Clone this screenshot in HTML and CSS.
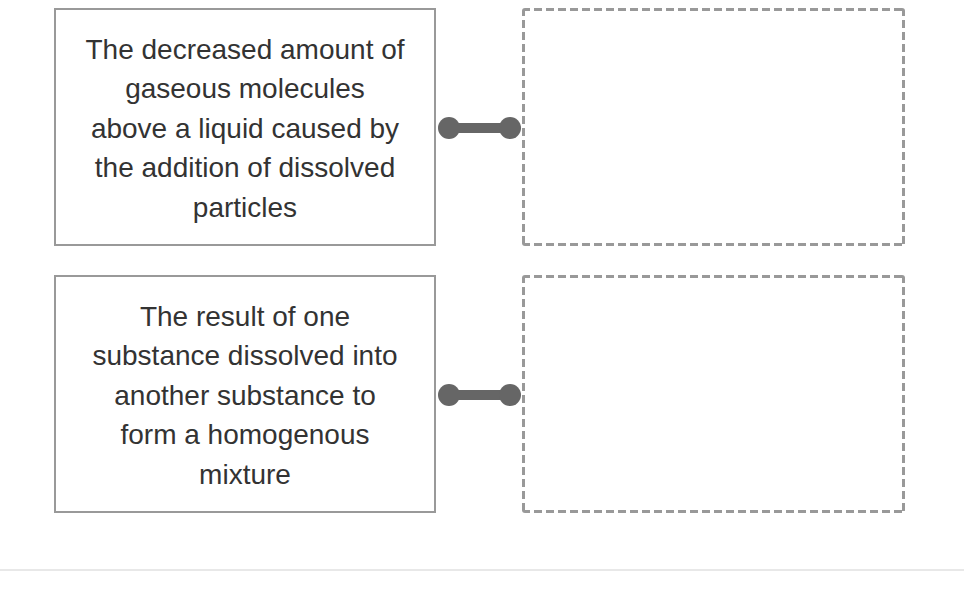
FILE: index.html
```html
<!DOCTYPE html>
<html lang="en">
  <head>
    <meta charset="UTF-8" />
    <meta name="viewport" content="width=device-width, initial-scale=1.0" />
    <title>Matching</title>
    <link rel="stylesheet" href="styles.css">
  </head>
  <body>
    <!-- matching pairs -->
    <div class="matching">
      <div class="pair">
        <div class="prompt">
          <p>The decreased amount of gaseous molecules above a liquid caused by the addition of dissolved particles</p>
        </div>
        <div class="link">
          <span class="dot"></span>
          <span class="bar"></span>
          <span class="dot"></span>
        </div>
        <div class="drop"></div>
      </div>

      <div class="pair">
        <div class="prompt">
          <p>The result of one substance dissolved into another substance to form a homogenous mixture</p>
        </div>
        <div class="link">
          <span class="dot"></span>
          <span class="bar"></span>
          <span class="dot"></span>
        </div>
        <div class="drop"></div>
      </div>
    </div>

    <hr class="divider" />
  </body>
</html>
```

FILE: styles.css
```css
/* base */
body {
  font-family: "Liberation Sans", Arial, Helvetica, sans-serif;
  margin: 0;
  padding: 0;
  background-color: #fff;
  color: #333;
}

/* matching list */
.matching {
  display: flex;
  flex-direction: column;
  gap: 29px;
  padding: 8px 0 0 54px;
}

.pair {
  display: flex;
  align-items: center;
}

/* left prompt card */
.prompt {
  width: 382px;
  height: 238px;
  box-sizing: border-box;
  border: 2px solid #999;
  padding: 3px 28px 0;
  display: flex;
  align-items: center;
  justify-content: center;
  text-align: center;
}

.prompt p {
  margin: 0;
  font-size: 28px;
  line-height: 39.5px;
}

/* connector between prompt and target */
.link {
  width: 86px;
  box-sizing: border-box;
  padding: 2px 1px 0 2px;
  display: flex;
  align-items: center;
}

.link .dot {
  width: 22px;
  height: 22px;
  border-radius: 50%;
  background-color: #666;
  flex: none;
}

.link .bar {
  flex: 1;
  height: 10px;
  margin: 0 -2px;
  background-color: #666;
}

/* empty drop target with dashed outline */
.drop {
  width: 383px;
  height: 238px;
  box-sizing: border-box;
  border-radius: 3px;
  background:
    repeating-linear-gradient(90deg, #999 0 8px, transparent 8px 12px) top left / 100% 3px no-repeat,
    repeating-linear-gradient(90deg, #999 0 8px, transparent 8px 12px) bottom left / 100% 3px no-repeat,
    repeating-linear-gradient(180deg, #999 0 8px, transparent 8px 12px) top left / 3px 100% no-repeat,
    repeating-linear-gradient(180deg, #999 0 8px, transparent 8px 12px) top right / 3px 100% no-repeat;
}

.divider {
  margin: 56px 0 0;
  border: 0;
  border-top: 2px solid #e8e8e8;
}
```
